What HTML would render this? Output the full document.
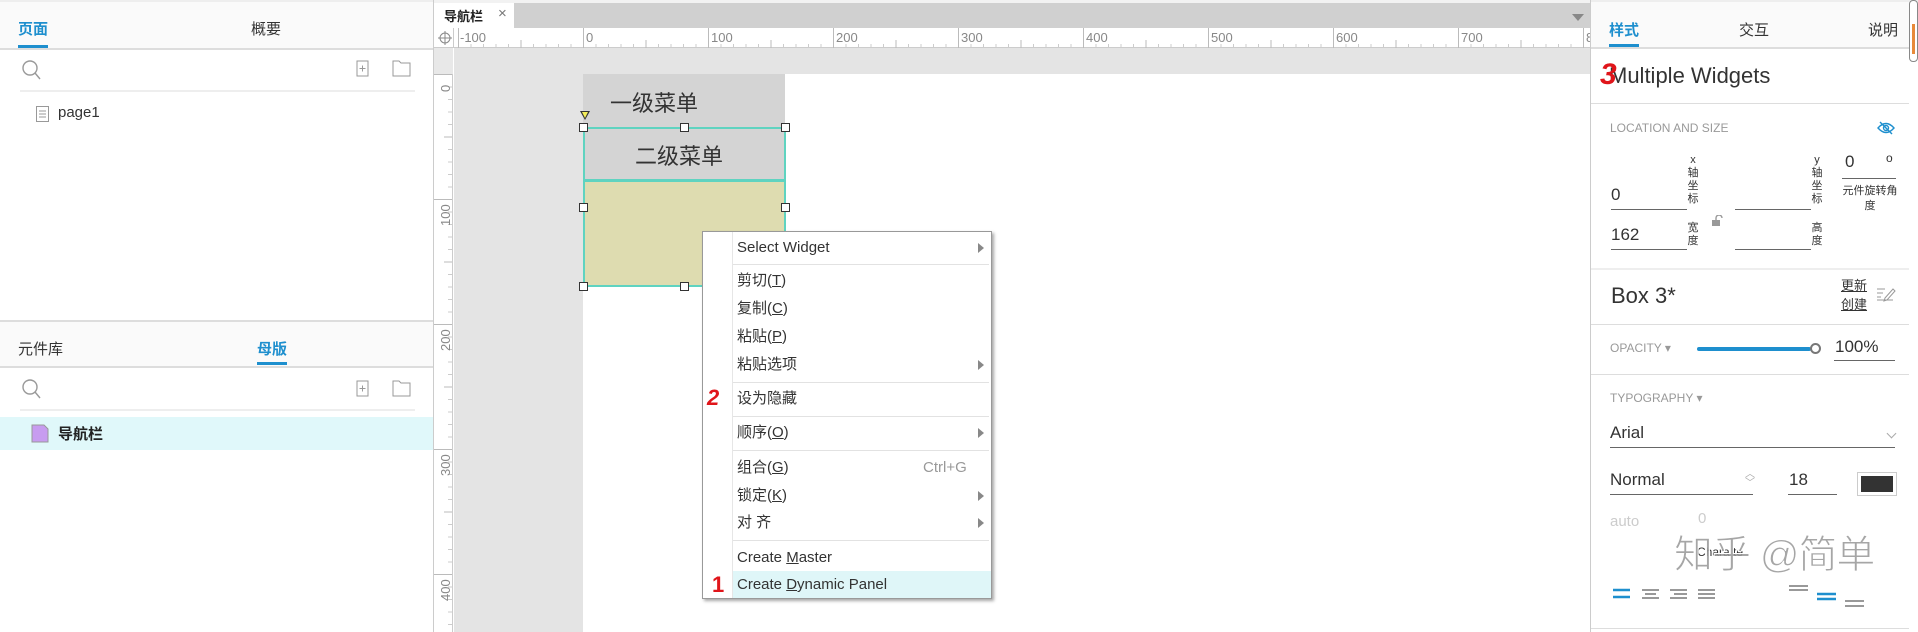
<!DOCTYPE html>
<html><head><meta charset="utf-8"><style>
*{margin:0;padding:0;box-sizing:border-box}
body{width:1918px;height:632px;position:relative;overflow:hidden;background:#fff;font-family:"Liberation Sans","Noto Sans CJK SC",sans-serif;color:#333}
.a{position:absolute}
.cj{font-family:"Liberation Sans","Noto Sans CJK SC",sans-serif}
.hl{position:absolute;height:1px;background:#ddd}
.menu div.it{position:absolute;left:34px;font-size:15px;color:#333;line-height:18px}
.arr{position:absolute;left:275px;width:0;height:0;border-left:6px solid #888;border-top:5px solid transparent;border-bottom:5px solid transparent}
.msep{position:absolute;left:30px;right:2px;height:1px;background:#e2e2e2}
.h{position:absolute;width:9px;height:9px;background:#fff;border:1px solid #333}
.lbl{position:absolute;font-size:11px;color:#333;line-height:13px;text-align:center;width:14px}
</style></head><body>

<!-- LEFT PANEL -->
<div class="a" style="left:0;top:0;width:433px;height:48px;background:#fafafa;border-top:2px solid #eee"></div>
<div class="a" style="left:18px;top:18px;font-size:15px;color:#1e8fce;font-weight:bold">页面</div>
<div class="a" style="left:18px;top:45px;width:30px;height:3px;background:#1e8fce"></div>
<div class="a" style="left:251px;top:18px;font-size:15px;color:#333">概要</div>
<div class="a" style="left:0;top:48px;width:433px;height:2px;background:#ddd"></div>
<svg class="a" style="left:20px;top:58px" width="24" height="24"><circle cx="10" cy="10" r="7" fill="none" stroke="#999" stroke-width="1.4"/><line x1="15" y1="15" x2="20" y2="21" stroke="#999" stroke-width="1.4"/></svg>
<svg class="a" style="left:356px;top:60px" width="14" height="18"><rect x="1" y="1" width="11" height="15" fill="none" stroke="#999"/><path d="M3.5 8.5h6M6.5 5.5v6" stroke="#999"/></svg>
<svg class="a" style="left:392px;top:60px" width="20" height="18"><path d="M1 1h6l2 2h9v13H1z" fill="none" stroke="#999"/></svg>
<div class="hl" style="left:20px;top:90px;width:395px;height:2px;background:#eee"></div>
<svg class="a" style="left:36px;top:106px" width="14" height="17"><rect x="0.5" y="0.5" width="12" height="15" fill="#fff" stroke="#999"/><path d="M3 5h7M3 8h7M3 11h7" stroke="#999"/></svg>
<div class="a" style="left:58px;top:104px;font-size:15px;color:#333">page1</div>

<div class="a" style="left:0;top:320px;width:433px;height:2px;background:#ddd"></div>
<div class="a" style="left:0;top:322px;width:433px;height:44px;background:#fafafa"></div>
<div class="a" style="left:18px;top:338px;font-size:15px">元件库</div>
<div class="a" style="left:257px;top:338px;font-size:15px;color:#1e8fce;font-weight:bold">母版</div>
<div class="a" style="left:257px;top:362px;width:30px;height:3px;background:#1e8fce"></div>
<div class="a" style="left:0;top:366px;width:433px;height:2px;background:#ddd"></div>
<svg class="a" style="left:20px;top:377px" width="24" height="24"><circle cx="10" cy="10" r="7" fill="none" stroke="#999" stroke-width="1.4"/><line x1="15" y1="15" x2="20" y2="21" stroke="#999" stroke-width="1.4"/></svg>
<svg class="a" style="left:356px;top:380px" width="14" height="18"><rect x="1" y="1" width="11" height="15" fill="none" stroke="#999"/><path d="M3.5 8.5h6M6.5 5.5v6" stroke="#999"/></svg>
<svg class="a" style="left:392px;top:380px" width="20" height="18"><path d="M1 1h6l2 2h9v13H1z" fill="none" stroke="#999"/></svg>
<div class="hl" style="left:20px;top:409px;width:395px;height:2px;background:#eee"></div>
<div class="a" style="left:0;top:417px;width:433px;height:33px;background:#e0f8fa"></div>
<svg class="a" style="left:31px;top:424px" width="18" height="19"><path d="M1 1h12l4 4v13H1z" fill="#c79cf0" stroke="#999"/></svg>
<div class="a" style="left:58px;top:423px;font-size:15px;color:#222;font-weight:bold">导航栏</div>
<div class="a" style="left:433px;top:0;width:1px;height:632px;background:#ccc"></div>

<!-- CANVAS -->
<div class="a" style="left:434px;top:0;width:1156px;height:28px;background:#d0d0d0;border-top:3px solid #f2f2f2"></div>
<div class="a" style="left:434px;top:3px;width:80px;height:25px;background:#fff"></div>
<div class="a" style="left:444px;top:6px;font-size:13px;color:#222;font-weight:bold">导航栏</div>
<div class="a" style="left:498px;top:5px;font-size:15px;color:#777">×</div>
<div class="a" style="left:1572px;top:14px;border-top:7px solid #888;border-left:6px solid transparent;border-right:6px solid transparent"></div>

<div class="a" style="left:434px;top:28px;width:1156px;height:20px;background:#fff;border-bottom:1px solid #ccc"></div>
<div class="a" style="left:453px;top:28px;width:1137px;height:20px;
background:
repeating-linear-gradient(90deg,#bbb 0 1px,transparent 1px 125px) 130px 0/125px 20px repeat-x,
repeating-linear-gradient(90deg,#bbb 0 1px,transparent 1px 62.5px) 67.5px 12px/62.5px 8px repeat-x,
repeating-linear-gradient(90deg,#ccc 0 1px,transparent 1px 12.5px) 5px 16px/12.5px 4px repeat-x"></div>
<svg class="a" style="left:437px;top:30px" width="16" height="16"><circle cx="8" cy="8" r="5" fill="none" stroke="#888"/><path d="M8 1v14M1 8h14" stroke="#888"/></svg>
<div class="a" style="left:453px;top:28px;width:1px;height:20px;background:#ccc"></div>
<div class="a" style="top:30px;left:0;font-size:13px;color:#888">
<span class="a" style="left:460px">-100</span><span class="a" style="left:586px">0</span><span class="a" style="left:711px">100</span><span class="a" style="left:836px">200</span><span class="a" style="left:961px">300</span><span class="a" style="left:1086px">400</span><span class="a" style="left:1211px">500</span><span class="a" style="left:1336px">600</span><span class="a" style="left:1461px">700</span><span class="a" style="left:1586px">8</span></div>

<div class="a" style="left:434px;top:48px;width:19px;height:584px;border-right:1px solid #ccc;
background:
repeating-linear-gradient(180deg,#bbb 0 1px,transparent 1px 125px) 0 26px/20px 125px repeat-y,
repeating-linear-gradient(180deg,#bbb 0 1px,transparent 1px 62.5px) 10px 26px/9px 62.5px repeat-y,
repeating-linear-gradient(180deg,#ccc 0 1px,transparent 1px 12.5px) 14px 1px/5px 12.5px repeat-y,#fff"></div>
<div class="a" style="left:434px;top:48px;width:19px;height:26px;background:#e8e8e8"></div>
<div class="a" style="left:0;top:0;font-size:13px;color:#888">
<span class="a" style="left:438px;top:92px;transform:rotate(-90deg);transform-origin:left top">0</span>
<span class="a" style="left:438px;top:226px;transform:rotate(-90deg);transform-origin:left top">100</span>
<span class="a" style="left:438px;top:351px;transform:rotate(-90deg);transform-origin:left top">200</span>
<span class="a" style="left:438px;top:476px;transform:rotate(-90deg);transform-origin:left top">300</span>
<span class="a" style="left:438px;top:601px;transform:rotate(-90deg);transform-origin:left top">400</span></div>

<div class="a" style="left:454px;top:48px;width:1136px;height:26px;background:#e4e4e4"></div>
<div class="a" style="left:454px;top:74px;width:129px;height:558px;background:#e4e4e4"></div>

<div class="a" style="left:583px;top:74px;width:202px;height:53px;background:#d4d4d4"></div>
<div class="a cj" style="left:610px;top:86px;font-size:22px;color:#333">一级菜单</div>
<div class="a" style="left:583px;top:127px;width:203px;height:54px;background:#d4d4d4;border:2px solid #5fd3c0"></div>
<div class="a cj" style="left:635px;top:139px;font-size:22px;color:#333">二级菜单</div>
<div class="a" style="left:583px;top:180px;width:203px;height:107px;background:#dedcb0;border:2px solid #5fd3c0"></div>
<div class="a" style="left:580px;top:111px;border-top:9px solid #333;border-left:5px solid transparent;border-right:5px solid transparent"></div>
<div class="a" style="left:582px;top:112px;border-top:6px solid #f4ee5a;border-left:3px solid transparent;border-right:3px solid transparent"></div>
<div class="h" style="left:579px;top:123px"></div><div class="h" style="left:680px;top:123px"></div><div class="h" style="left:781px;top:123px"></div>
<div class="h" style="left:579px;top:203px"></div><div class="h" style="left:781px;top:203px"></div>
<div class="h" style="left:579px;top:282px"></div><div class="h" style="left:680px;top:282px"></div>

<!-- MENU -->
<div class="a menu" style="left:702px;top:231px;width:290px;height:368px;background:#fff;border:1px solid #999;box-shadow:2px 2px 3px rgba(0,0,0,.35)">
<div class="a" style="left:29px;top:0;width:1px;height:366px;background:#e6e6e6"></div>
<div class="a" style="left:30px;top:339px;width:258px;height:27px;background:#dff6f8"></div>
<div class="it" style="top:7px">Select Widget</div><div class="arr" style="top:11px"></div>
<div class="msep" style="top:32px"></div>
<div class="it" style="top:40px">剪切(<u>T</u>)</div>
<div class="it" style="top:68px">复制(<u>C</u>)</div>
<div class="it" style="top:96px">粘贴(<u>P</u>)</div>
<div class="it" style="top:124px">粘贴选项</div><div class="arr" style="top:128px"></div>
<div class="msep" style="top:150px"></div>
<div class="it" style="top:158px">设为隐藏</div>
<div class="msep" style="top:184px"></div>
<div class="it" style="top:192px">顺序(<u>O</u>)</div><div class="arr" style="top:196px"></div>
<div class="msep" style="top:218px"></div>
<div class="it" style="top:227px">组合(<u>G</u>)</div><div class="a" style="left:220px;top:227px;font-size:15px;color:#999">Ctrl+G</div>
<div class="it" style="top:255px">锁定(<u>K</u>)</div><div class="arr" style="top:259px"></div>
<div class="it" style="top:282px">对 齐</div><div class="arr" style="top:286px"></div>
<div class="msep" style="top:308px"></div>
<div class="it" style="top:317px">Create <u>M</u>aster</div>
<div class="it" style="top:344px">Create <u>D</u>ynamic Panel</div>
</div>
<div class="a" style="left:707px;top:385px;font-size:22px;color:#e0151a;font-weight:bold;font-style:italic">2</div>
<div class="a" style="left:712px;top:572px;font-size:22px;color:#e0151a;font-weight:bold">1</div>

<!-- RIGHT PANEL -->
<div class="a" style="left:1590px;top:0;width:1px;height:632px;background:#ccc"></div>
<div class="a" style="left:1591px;top:0;width:327px;height:48px;background:#fafafa;border-top:2px solid #eee"></div>
<div class="a" style="left:1609px;top:19px;font-size:15px;color:#1e8fce;font-weight:bold">样式</div>
<div class="a" style="left:1609px;top:44px;width:30px;height:3px;background:#1e8fce"></div>
<div class="a" style="left:1739px;top:19px;font-size:15px">交互</div>
<div class="a" style="left:1868px;top:19px;font-size:15px">说明</div>
<div class="a" style="left:1591px;top:47px;width:318px;height:2px;background:#ddd"></div>
<div class="a" style="left:1909px;top:0;width:9px;height:62px;border:1px solid #888;border-radius:4px;background:#fff"></div>
<div class="a" style="left:1912px;top:24px;width:3px;height:30px;background:#e88a3a"></div>

<div class="a" style="left:1609px;top:63px;font-size:22px;color:#333">Multiple Widgets</div>
<div class="a" style="left:1600px;top:58px;font-size:30px;color:#e0151a;font-weight:bold;font-style:italic">3</div>
<div class="hl" style="left:1591px;top:103px;width:318px"></div>
<div class="a" style="left:1610px;top:121px;font-size:12px;color:#999">LOCATION AND SIZE</div>
<svg class="a" style="left:1876px;top:120px" width="20" height="16"><path d="M2 8q8-9 16 0q-8 9-16 0z" fill="none" stroke="#1e8fce" stroke-width="1.4"/><circle cx="10" cy="8" r="2.5" fill="none" stroke="#1e8fce" stroke-width="1.4"/><path d="M4 2l12 12" stroke="#1e8fce" stroke-width="1.4"/></svg>
<div class="lbl" style="left:1686px;top:154px">x<br>轴<br>坐<br>标</div>
<div class="a" style="left:1611px;top:185px;font-size:17px">0</div>
<div class="a" style="left:1611px;top:209px;width:76px;height:1px;background:#666"></div>
<div class="lbl" style="left:1810px;top:154px">y<br>轴<br>坐<br>标</div>
<div class="a" style="left:1735px;top:209px;width:76px;height:1px;background:#666"></div>
<div class="a" style="left:1845px;top:152px;font-size:17px">0</div>
<div class="a" style="left:1886px;top:151px;font-size:12px">o</div>
<div class="a" style="left:1842px;top:178px;width:54px;height:1px;background:#666"></div>
<div class="a" style="left:1840px;top:184px;font-size:11px;width:60px;text-align:center;line-height:15px">元件旋转角<br>度</div>
<div class="a" style="left:1611px;top:225px;font-size:17px">162</div>
<div class="a" style="left:1611px;top:249px;width:76px;height:1px;background:#666"></div>
<div class="lbl" style="left:1686px;top:222px">宽<br>度</div>
<svg class="a" style="left:1711px;top:215px" width="12" height="12"><path d="M5 5V3a3 3 0 0 1 6 0" fill="none" stroke="#999" stroke-width="1.4"/><rect x="1" y="5" width="8" height="6" fill="#999"/></svg>
<div class="lbl" style="left:1810px;top:222px">高<br>度</div>
<div class="a" style="left:1735px;top:249px;width:76px;height:1px;background:#666"></div>
<div class="hl" style="left:1591px;top:268px;width:318px;height:2px;background:#eee"></div>
<div class="a" style="left:1611px;top:283px;font-size:22px">Box 3*</div>
<div class="a" style="left:1841px;top:276px;font-size:13px;line-height:19px;text-decoration:underline">更新<br>创建</div>
<svg class="a" style="left:1876px;top:286px" width="20" height="16"><path d="M1 3h8M1 7h6M1 11h4M1 14h16M9 12l8-9 2 2-8 9-3 1z" fill="none" stroke="#999"/></svg>
<div class="hl" style="left:1591px;top:324px;width:318px"></div>
<div class="a" style="left:1610px;top:341px;font-size:12px;color:#999">OPACITY ▾</div>
<div class="a" style="left:1697px;top:347px;width:114px;height:4px;background:#1e8fce;border-radius:2px"></div>
<div class="a" style="left:1810px;top:343px;width:11px;height:11px;border:2px solid #777;border-radius:50%;background:#fff"></div>
<div class="a" style="left:1835px;top:337px;font-size:17px">100%</div>
<div class="a" style="left:1834px;top:360px;width:61px;height:1px;background:#666"></div>
<div class="hl" style="left:1591px;top:374px;width:318px"></div>
<div class="a" style="left:1610px;top:391px;font-size:12px;color:#999">TYPOGRAPHY ▾</div>
<div class="a" style="left:1610px;top:423px;font-size:17px">Arial</div>
<div class="a" style="left:1888px;top:430px;width:7px;height:7px;border-right:1px solid #aaa;border-bottom:1px solid #aaa;transform:rotate(45deg)"></div>
<div class="a" style="left:1610px;top:447px;width:285px;height:1px;background:#666"></div>
<div class="a" style="left:1610px;top:470px;font-size:17px">Normal</div>
<div class="a" style="left:1745px;top:470px;font-size:10px;color:#aaa;line-height:9px">︿<br>﹀</div>
<div class="a" style="left:1610px;top:494px;width:143px;height:1px;background:#666"></div>
<div class="a" style="left:1789px;top:470px;font-size:17px">18</div>
<div class="a" style="left:1788px;top:494px;width:49px;height:1px;background:#666"></div>
<div class="a" style="left:1857px;top:472px;width:40px;height:24px;border:1px solid #ccc;background:#fff;padding:3px"><div style="width:100%;height:100%;background:#333"></div></div>
<div class="a" style="left:1610px;top:513px;font-size:15px;color:#ccc">auto</div>
<div class="a" style="left:1698px;top:510px;font-size:15px;color:#ccc">0</div>
<div class="a" style="left:1697px;top:545px;font-size:12px;color:#333">Chara te</div>
<div class="a" style="left:1674px;top:524px;font-size:39px;color:rgba(150,150,150,.85);-webkit-text-stroke:1px #fff;letter-spacing:-1px;white-space:nowrap">知乎 @简单</div>
<svg class="a" style="left:1612px;top:588px" width="110" height="12"><path d="M1 2h17M1 9h17" stroke="#1e8fce" stroke-width="2.5"/><path d="M30 2h17M33 6h11M30 10h17M58 2h17M62 6h13M58 10h17M86 2h17M86 6h17M86 10h17" stroke="#999" stroke-width="2"/></svg>
<svg class="a" style="left:1787px;top:584px" width="90" height="24"><path d="M2 2h19M2 6h19" stroke="#999" stroke-width="2"/><path d="M30 10h19M30 15h19" stroke="#1e8fce" stroke-width="2.5"/><path d="M58 17h19M58 22h19" stroke="#999" stroke-width="2"/></svg>
<div class="hl" style="left:1591px;top:628px;width:318px"></div>
</body></html>
